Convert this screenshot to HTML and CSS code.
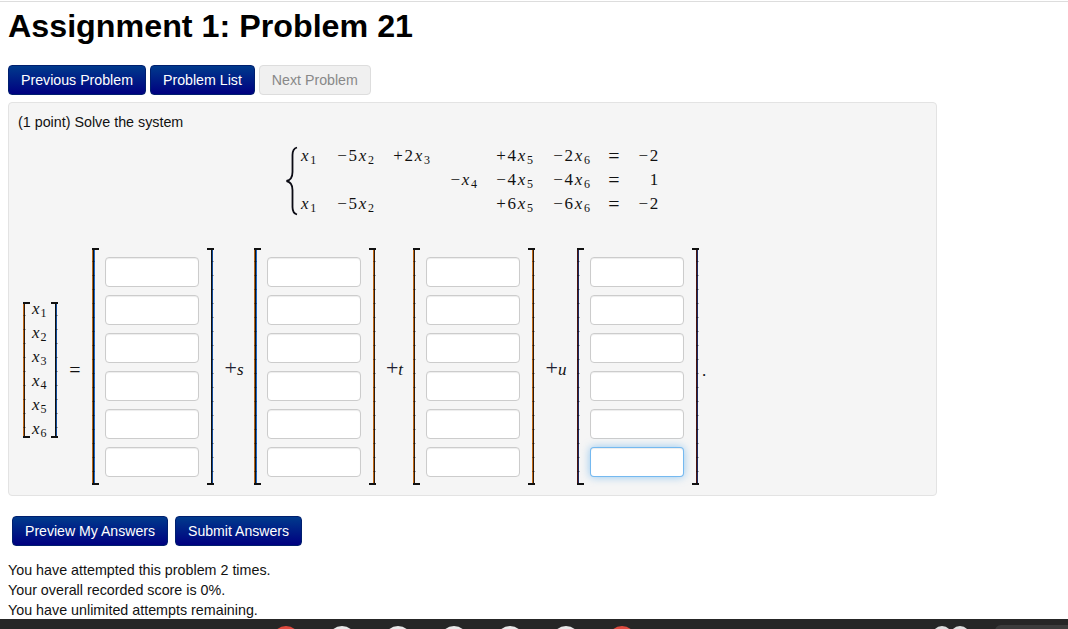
FILE: index.html
```html
<!DOCTYPE html>
<html lang="en">
<head>
<meta charset="utf-8">
<title>Assignment 1: Problem 21</title>
<link rel="stylesheet" href="styles.css">
</head>
<body>
<main class="page">
  <h1 class="title">Assignment 1: Problem 21</h1>
  <nav class="nav">
    <a class="btn">Previous Problem</a>
    <a class="btn">Problem List</a>
    <a class="btn btn-disabled">Next Problem</a>
  </nav>
  <section class="well">
    <p class="prompt">(1 point) Solve the system</p>
    <div class="system">
      <svg class="brace" width="14" height="70" viewBox="0 0 14 70"><path d="M12 1.500C8.500 2.500 7.500 4.500 7.500 9V26C7.500 31 6 34 1.500 35C6 36 7.500 39 7.500 44V61C7.500 65.500 8.500 67.500 12 68.500" fill="none" stroke="#0b0b14" stroke-width="1.800"/></svg>
      <div class="eqs math">
        <span class="l"><i>x</i><sub>1</sub></span><span>−5<i>x</i><sub>2</sub></span><span>+2<i>x</i><sub>3</sub></span><span></span><span>+4<i>x</i><sub>5</sub></span><span>−2<i>x</i><sub>6</sub></span><span class="c">=</span><span>−2</span>
        <span></span><span></span><span></span><span>−<i>x</i><sub>4</sub></span><span>−4<i>x</i><sub>5</sub></span><span>−4<i>x</i><sub>6</sub></span><span class="c">=</span><span>1</span>
        <span class="l"><i>x</i><sub>1</sub></span><span>−5<i>x</i><sub>2</sub></span><span></span><span></span><span>+6<i>x</i><sub>5</sub></span><span>−6<i>x</i><sub>6</sub></span><span class="c">=</span><span>−2</span>
      </div>
    </div>
    <div class="solution math">
      <div class="vector">
        <span class="bracket bl fringe-o"></span>
        <div class="vars">
          <span><i>x</i><sub>1</sub></span><span><i>x</i><sub>2</sub></span><span><i>x</i><sub>3</sub></span><span><i>x</i><sub>4</sub></span><span><i>x</i><sub>5</sub></span><span><i>x</i><sub>6</sub></span>
        </div>
        <span class="bracket br fringe-b"></span>
      </div>
      <span class="op op-eq">=</span>
      <div class="matrix">
        <span class="bracket bl fringe-a"></span>
        <div class="cells"><input class="cell"><input class="cell"><input class="cell"><input class="cell"><input class="cell"><input class="cell"></div>
        <span class="bracket br fringe-b"></span>
      </div>
      <span class="op op-s"><span class="plus">+</span><i>s</i></span>
      <div class="matrix">
        <span class="bracket bl fringe-a"></span>
        <div class="cells"><input class="cell"><input class="cell"><input class="cell"><input class="cell"><input class="cell"><input class="cell"></div>
        <span class="bracket br fringe-o"></span>
      </div>
      <span class="op op-t"><span class="plus">+</span><i>t</i></span>
      <div class="matrix">
        <span class="bracket bl fringe-o"></span>
        <div class="cells"><input class="cell"><input class="cell"><input class="cell"><input class="cell"><input class="cell"><input class="cell"></div>
        <span class="bracket br fringe-o"></span>
      </div>
      <span class="op op-u"><span class="plus">+</span><i>u</i></span>
      <div class="matrix">
        <span class="bracket bl fringe-r"></span>
        <div class="cells"><input class="cell"><input class="cell"><input class="cell"><input class="cell"><input class="cell"><input class="cell cell-focus"></div>
        <span class="bracket br fringe-r"></span>
      </div>
      <span class="period">.</span>
    </div>
  </section>
  <div class="actions">
    <a class="btn">Preview My Answers</a>
    <a class="btn">Submit Answers</a>
  </div>
  <p class="status">You have attempted this problem 2 times.<br>Your overall recorded score is 0%.<br>You have unlimited attempts remaining.</p>
</main>
<footer class="shelf">
  <div class="dots">
    <span class="dot dot-red"></span><span class="dot"></span><span class="dot"></span><span class="dot"></span><span class="dot"></span><span class="dot"></span><span class="dot dot-red"></span>
  </div>
  <div class="tray">
    <span class="blob"></span><span class="blob"></span>
    <span class="pill"></span>
  </div>
</footer>
</body>
</html>
```
FILE: styles.css
```css
html, body { margin: 0; padding: 0; height: 100%; overflow: hidden; background: #fff; }
body { font-family: "Liberation Sans", Arial, sans-serif; font-size: 14.3px; color: #111; }

.page { border-top: 1px solid #fff; padding: 0 8px; }
.page::before { content: ""; display: block; height: 1px; margin: 0 -8px; background: #ddd; }

.title { margin: 6px 0 0; font-size: 32.25px; line-height: 36px; font-weight: 700; color: #000; }

.nav { display: flex; gap: 4px; margin-top: 21px; }
.nav .btn { font-size: 14.2px; }
.actions { display: flex; gap: 7px; margin: 20px 0 0 4px; }

.btn {
  display: block; box-sizing: border-box; height: 30px; padding: 0 12px;
  line-height: 28.5px; font-size: 14.1px; color: #fff; white-space: nowrap;
  background: linear-gradient(#003a8c, #000080);
  border: 1px solid #001f6e; border-radius: 4px;
}
.btn-disabled { background: #f0f0f0; color: #888; border-color: #ddd; }

.well {
  box-sizing: border-box; width: 929px; height: 394px; margin-top: 7px;
  padding: 10px 9px 0;
  background: #f5f5f5; border: 1px solid #e3e3e3; border-radius: 4px;
}
.prompt { margin: 0; line-height: 19px; }

.math { font-family: "Liberation Serif", "Times New Roman", serif; font-size: 17px; letter-spacing: 1.7px; color: #111; }
.math sub { font-size: 12px; line-height: 0; vertical-align: -3px; letter-spacing: 0; }

.system { display: flex; align-items: center; margin: 14px 0 0 267px; height: 70px; }
.brace { flex: none; }
.eqs {
  display: grid; margin-left: 2px;
  grid-template-columns: 17px 56px 56px 47px 56px 57px 48px 22px;
  grid-auto-rows: 24px; line-height: 22px; text-align: right;
}
.eqs .l { text-align: left; }
.eqs .c { text-align: center; font-size: 20px; letter-spacing: 0; }

.solution { display: flex; align-items: center; margin: 32px 0 0 5px; }
.vector { display: flex; height: 136px; margin-top: 7px; }
.vars { display: flex; flex-direction: column; width: 21px; padding-left: 2px; box-sizing: border-box; }
.vars span { flex: none; height: 24px; line-height: 14px; white-space: nowrap; letter-spacing: 1px; }

.bracket {
  flex: none; display: block; box-sizing: border-box; width: 7px;
  border: 0 solid #111; border-top-width: 2px; border-bottom-width: 2px;
  background-repeat: no-repeat, no-repeat; background-size: 3px 100%, 3px 100%;
  background-origin: border-box;
  background-image:
    repeating-linear-gradient(transparent 0 13px, rgba(0,0,0,.3) 13px 14px),
    linear-gradient(90deg, var(--p1) 0 1px, var(--p2) 1px 2px, var(--p3) 2px 3px);
}
.bl { background-position: left top, left top; }
.br { background-position: right top, right top; }
.fringe-a { --p1: #b9681a; --p2: #111; --p3: #1a66c8; }
.fringe-o { --p1: #c46a14; --p2: #2a1a10; --p3: transparent; }
.fringe-b { --p1: #111; --p2: #0f4a9a; --p3: transparent; }
.fringe-r { --p1: #4a1410; --p2: #1a2a60; --p3: transparent; }

.matrix { display: flex; height: 237px; }
.cells { display: flex; flex-direction: column; gap: 8px; padding: 9px 8px 8px 6px; }
.cell {
  display: block; box-sizing: border-box; width: 94px; height: 30px; margin: 0; padding: 0;
  background: #fff; border: 1px solid #ccc; border-radius: 4px;
  box-shadow: inset 0 1px 1px rgba(0,0,0,.075); outline: none;
}
.cell-focus { border-color: rgba(82,168,236,.8); box-shadow: inset 0 1px 1px rgba(0,0,0,.075), 0 0 8px rgba(82,168,236,.6); }

.op { flex: none; text-align: center; margin-top: 4px; line-height: 20px; white-space: nowrap; letter-spacing: 0; }
.op-eq { width: 34px; margin-top: 7px; font-size: 20px; }
.op-s { width: 40px; }
.op-t { width: 37px; }
.op-u { width: 42px; }
.plus { font-size: 22px; color: #223; }
.period { margin: 8px 0 0 3px; line-height: 20px; }

.status { margin: 14px 0 0; line-height: 20px; color: #111; }

.shelf {
  position: fixed; left: 0; right: 0; bottom: 0; height: 10px; overflow: hidden;
  display: flex; background: #262626;
}
.dots { display: flex; gap: 28px; margin: 7px 0 0 272px; }
.dot { width: 28px; height: 28px; border-radius: 50%; background: #e8e8e8; }
.dot-red { background: #e04a3f; }
.tray { display: flex; margin: 7px 0 0 auto; }
.blob { width: 20px; height: 20px; margin-left: -2px; border-radius: 50%; background: #ddd; }
.pill { width: 73px; height: 20px; margin: -1px 0 0 25px; border-radius: 6px 0 0 0; background: #3c3c3c; }
```
